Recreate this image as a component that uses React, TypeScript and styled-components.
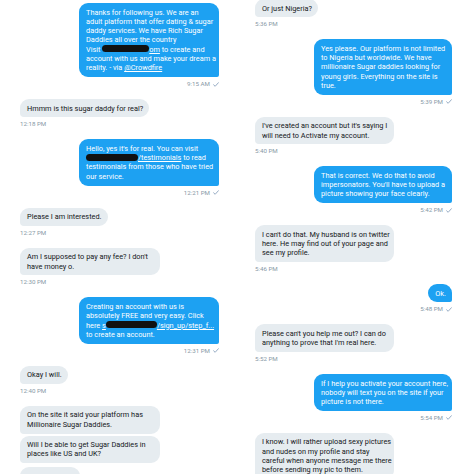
import React from 'react';
import styled, { createGlobalStyle } from 'styled-components';

const GlobalStyle = createGlobalStyle`
  html, body {
    margin: 0;
    padding: 0;
    background: #fff;
    overflow: hidden;
  }
  body {
    font-family: Roboto, "Noto Sans", "Liberation Sans", sans-serif;
  }
`;

const Page = styled.div`
  display: grid;
  grid-template-columns: 237px 237px;
  width: 474px;
  height: 474px;
  overflow: hidden;
  background: #fff;
`;

const Column = styled.div<{ $pl: number; $pr: number }>`
  padding: 0 ${(p) => p.$pr}px 0 ${(p) => p.$pl}px;
  overflow: hidden;
`;

const Stack = styled.div<{ $top: number }>`
  display: flex;
  flex-direction: column;
  margin-top: ${(p) => p.$top}px;
`;

const Message = styled.div<{ $out?: boolean; $gap: number }>`
  display: flex;
  flex-direction: column;
  align-items: ${(p) => (p.$out ? 'flex-end' : 'flex-start')};
  margin-bottom: ${(p) => p.$gap}px;
`;

const Bubble = styled.div<{ $out?: boolean; $w?: number }>`
  box-sizing: border-box;
  width: ${(p) => (p.$w ? `${p.$w}px` : 'auto')};
  min-height: 18.3px;
  padding: 4.5px 6px 4.5px 7px;
  font-size: 7.35px;
  line-height: 9.3px;
  color: ${(p) => (p.$out ? '#ffffff' : '#14171a')};
  background: ${(p) => (p.$out ? '#1da1f2' : '#e6ecf0')};
  border-radius: ${(p) => (p.$out ? '9px 9px 2px 9px' : '9px 9px 9px 4px')};
`;

const Line = styled.span`
  display: block;
  white-space: nowrap;
`;

const Link = styled.span`
  text-decoration: underline;
`;

const Redacted = styled.span<{ $w: number }>`
  display: inline-block;
  width: ${(p) => p.$w}px;
  height: 7px;
  margin-top: -2px;
  vertical-align: middle;
  background: #111;
  border-radius: 4px;
`;

const Time = styled.div`
  display: flex;
  align-items: center;
  gap: 3px;
  height: 8px;
  margin-top: 3px;
  font-size: 6.2px;
  line-height: 8px;
  color: #8899a6;
`;

const Check = () => (
  <svg width="6" height="5" viewBox="0 0 10 8" fill="none">
    <path d="M1 4.5 L3.6 7 L9 1" stroke="#8aa3bd" strokeWidth="1.5" strokeLinecap="round" strokeLinejoin="round" />
  </svg>
);

type Msg = {
  out?: boolean;
  w?: number;
  lines: React.ReactNode[];
  time?: string;
  gap?: number;
};

const left: Msg[] = [
  {
    out: true,
    w: 140,
    lines: [
      'Thanks for following us. We are an',
      'adult platform that offer dating & sugar',
      'daddy services. We have Rich Sugar',
      'Daddies all over the country',
      <>Visit <Link><Redacted $w={47} />om</Link> to create and</>,
      'account with us and make your dream a',
      <>reality. - via <Link>@Crowdfire</Link></>,
    ],
    time: '9:15 AM',
  },
  { lines: ['Hmmm is this sugar daddy for real?'], time: '12:18 PM' },
  {
    out: true,
    w: 140,
    lines: [
      "Hello, yes it's for real. You can visit",
      <><Redacted $w={52} /><Link>/testimonials</Link> to read</>,
      'testimonials from those who have tried',
      'our service.',
    ],
    time: '12:21 PM',
  },
  { lines: ['Please I am interested.'], time: '12:27 PM' },
  { w: 140, lines: ["Am I supposed to pay any fee? I don't", 'have money o.'], time: '12:30 PM' },
  {
    out: true,
    w: 140,
    lines: [
      'Creating an account with us is',
      'absolutely FREE and very easy. Click',
      <>here <Link>s<Redacted $w={51} />/sign_up/step_f...</Link></>,
      'to create an account.',
    ],
    time: '12:31 PM',
  },
  { lines: ['Okay I will.'], time: '12:40 PM' },
  { w: 140, lines: ['On the site it said your platform has', 'Millionaire Sugar Daddies.'], gap: 2 },
  { w: 140, lines: ['Will I be able to get Sugar Daddies in', 'places like US and UK?'], gap: 4 },
  { w: 60, lines: [] },
];

const right: Msg[] = [
  { lines: ['Or just Nigeria?'], time: '5:36 PM' },
  {
    out: true,
    w: 138,
    lines: [
      'Yes please. Our platform is not limited',
      'to Nigeria but worldwide. We have',
      'millionaire Sugar daddies looking for',
      'young girls. Everything on the site is',
      'true.',
    ],
    time: '5:39 PM',
  },
  { w: 139, lines: ["I've created an account but it's saying I", 'will need to Activate my account.'], time: '5:40 PM' },
  {
    out: true,
    w: 138,
    lines: ['That is correct. We do that to avoid', "impersonators. You'll have to upload a", 'picture showing your face clearly.'],
    time: '5:42 PM',
  },
  {
    w: 139,
    lines: ["I can't do that. My husband is on twitter", 'here. He may find out of your page and', 'see my profile.'],
    time: '5:46 PM',
  },
  { out: true, lines: ['Ok.'], time: '5:48 PM' },
  { w: 139, lines: ["Please can't you help me out? I can do", "anything to prove that I'm real here."], time: '5:52 PM' },
  {
    out: true,
    w: 138,
    lines: ['If I help you activate your account here,', 'nobody will text you on the site if your', 'picture is not there.'],
    time: '5:54 PM',
  },
  {
    w: 139,
    lines: [
      'I know. I will rather upload sexy pictures',
      'and nudes on my profile and stay',
      'careful when anyone message me there',
      'before sending my pic to them.',
    ],
  },
];

const Thread = ({ items }: { items: Msg[] }) => (
  <>
    {items.map((m, i) => (
      <Message key={i} $out={m.out} $gap={m.time ? 11 : m.gap ?? 0}>
        <Bubble $out={m.out} $w={m.w}>
          {m.lines.map((l, j) => (
            <Line key={j}>{l}</Line>
          ))}
        </Bubble>
        {m.time && (
          <Time>
            {m.time}
            {m.out && <Check />}
          </Time>
        )}
      </Message>
    ))}
  </>
);

export default function App() {
  return (
    <>
      <GlobalStyle />
      <Page>
        <Column $pl={20} $pr={18}>
          <Stack $top={3}>
            <Thread items={left} />
          </Stack>
        </Column>
        <Column $pl={18} $pr={22}>
          <Stack $top={-1}>
            <Thread items={right} />
          </Stack>
        </Column>
      </Page>
    </>
  );
}
